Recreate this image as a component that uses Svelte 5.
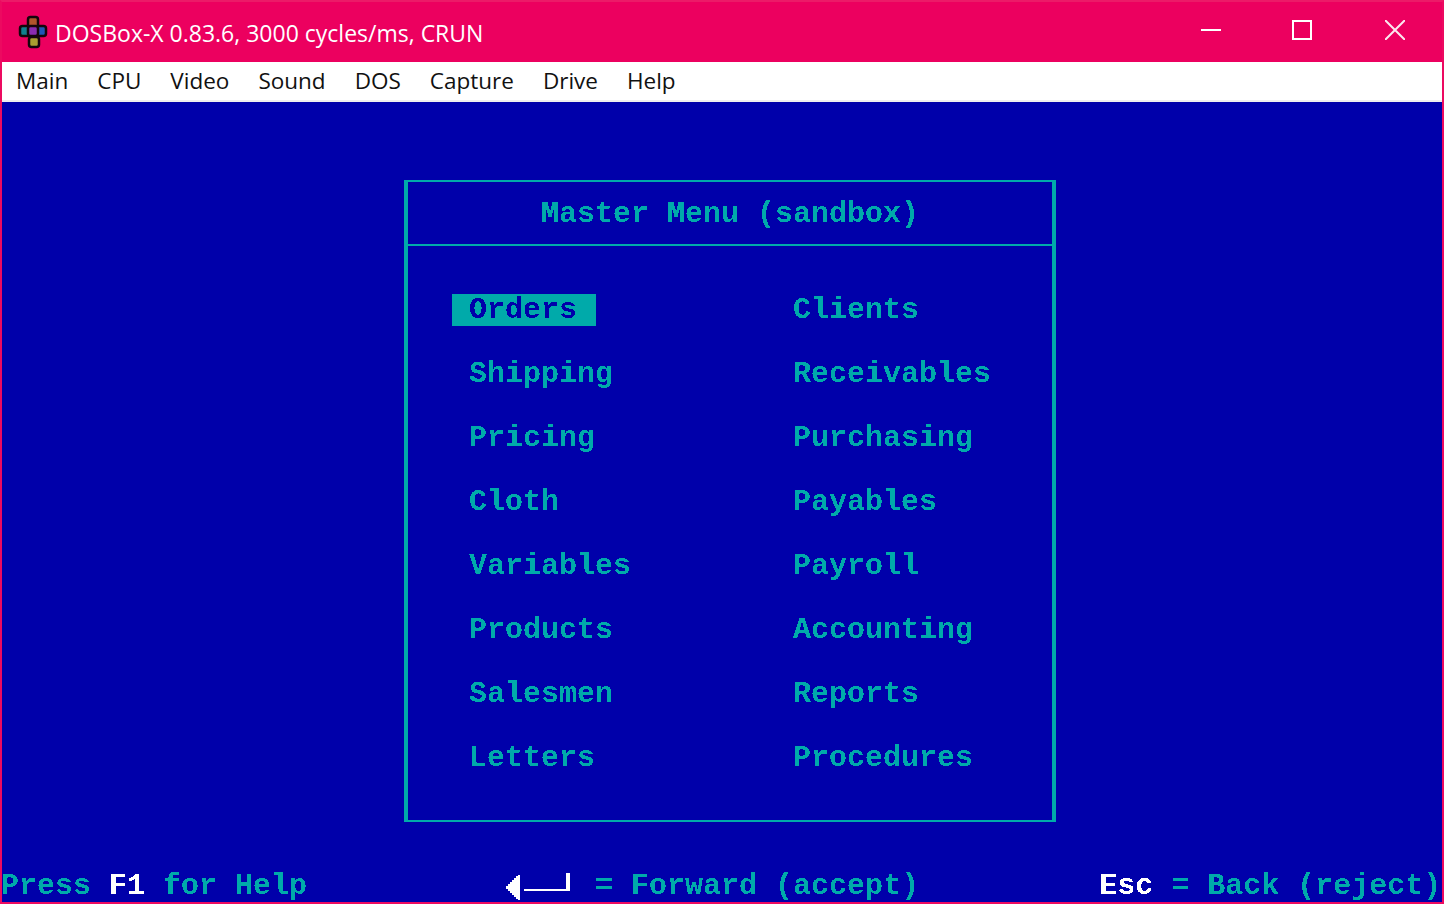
<script lang="ts">
  const menus = ["Main", "CPU", "Video", "Sound", "DOS", "Capture", "Drive", "Help"];

  // two columns, read row by row
  const items = [
    ["Orders", "Clients"],
    ["Shipping", "Receivables"],
    ["Pricing", "Purchasing"],
    ["Cloth", "Payables"],
    ["Variables", "Payroll"],
    ["Products", "Accounting"],
    ["Salesmen", "Reports"],
    ["Letters", "Procedures"],
  ].flat();

  let selected = $state("Orders");
</script>

<div class="window">
  <header class="titlebar">
    <svg class="app-icon" width="30" height="34" viewBox="0 0 30 34">
      <g stroke="#14060c" stroke-width="2.5" stroke-linejoin="round">
        <rect x="10" y="2" width="10" height="10" rx="2.5" fill="#b0552c" />
        <rect x="2" y="11" width="10" height="10" rx="2.5" fill="#10808e" />
        <rect x="18" y="11" width="10" height="10" rx="2.5" fill="#1f55b5" />
        <rect x="10" y="11" width="10" height="10" rx="2.5" fill="#8a2bb0" />
        <rect x="11" y="22" width="10" height="10" rx="2.5" fill="#a8a030" />
      </g>
    </svg>
    <span class="title">DOSBox-X 0.83.6, 3000 cycles/ms, CRUN</span>
    <div class="controls">
      <button aria-label="Minimize">
        <svg width="20" height="20" viewBox="0 0 20 20"><path d="M0 10h20" /></svg>
      </button>
      <button aria-label="Maximize">
        <svg class="max" width="20" height="20" viewBox="0 0 20 20"><path d="M1 1h18v18H1z" /></svg>
      </button>
      <button aria-label="Close">
        <svg class="close" width="20" height="20" viewBox="0 0 20 20"><path d="M0 0l20 20M20 0L0 20" /></svg>
      </button>
    </div>
  </header>

  <nav class="menubar">
    {#each menus as menu}
      <span>{menu}</span>
    {/each}
  </nav>

  <main class="screen">
    <svg class="defs" width="0" height="0" aria-hidden="true">
      <filter id="crisp" color-interpolation-filters="sRGB" x="0" y="0" width="100%" height="100%">
        <feComponentTransfer>
          <feFuncA type="discrete" tableValues="0 1" />
        </feComponentTransfer>
      </filter>
    </svg>

    <section class="box">
      <h1>Master Menu (sandbox)</h1>
      <div class="items">
        {#each items as item}
          <button class="item" class:active={item === selected} onclick={() => (selected = item)}>
            <span>{item}</span>
          </button>
        {/each}
      </div>
    </section>

    <footer class="status">
      <span class="help">Press <b>F1</b> for Help</span>
      <svg class="enter" width="72" height="32" viewBox="0 0 72 32" shape-rendering="crispEdges">
        <path d="M0 16h2v-2h2v-2h2v-2h2v-2h2v-2h2v-1h2v25h-2v-1h-2v-2h-2v-2h-2v-2h-2v-2h-2v-2h-2z" />
        <path d="M18 19h42v-16h4v18h-46z" />
      </svg>
      <span class="forward">= Forward (accept)</span>
      <span class="back"><b>Esc</b> = Back (reject)</span>
    </footer>
  </main>
</div>

<style>
  :global(body) {
    margin: 0;
    background: #0000aa;
  }

  .window {
    width: 1444px;
    height: 904px;
    box-sizing: border-box;
    display: flex;
    flex-direction: column;
    border: 2px solid #ec0a60;
    border-top-color: #ec1a68;
    overflow: hidden;
  }

  .titlebar {
    flex: 0 0 60px;
    display: flex;
    align-items: center;
    background: #ec005f;
    color: #fff;
    padding-left: 16px;
    font-family: "Open Sans", "Noto Sans", sans-serif;
  }

  .app-icon {
    margin-right: 7px;
    filter: blur(0.6px);
  }

  .title {
    font-size: 23px;
    margin-top: 1px;
  }

  .controls {
    margin: -4px 1px 0 auto;
    display: flex;
  }

  .controls button {
    width: 92px;
    height: 44px;
    padding: 0;
    border: 0;
    background: none;
    display: flex;
    align-items: center;
    justify-content: center;
  }

  .controls svg {
    fill: none;
    stroke: #fff;
    stroke-width: 2;
  }

  .controls .max {
    margin-right: 2px;
  }

  .controls .close {
    stroke: #fbe8ef;
  }

  .menubar {
    flex: 0 0 40px;
    box-sizing: border-box;
    display: flex;
    align-items: center;
    gap: 29px;
    padding: 0 0 1px 14px;
    background: #fff;
    border-bottom: 2px solid #eeeeee;
    color: #111;
    font-family: "Open Sans", "Noto Sans", sans-serif;
    font-size: 22.5px;
  }

  .screen {
    flex: 1;
    display: flex;
    flex-direction: column;
    background: #0000aa;
    color: #00aaaa;
    font-family: "Liberation Mono", monospace;
    font-weight: 700;
    font-size: 30px;
    line-height: 32px;
  }

  .defs {
    position: absolute;
  }

  .box {
    width: 652px;
    height: 642px;
    box-sizing: border-box;
    margin: 78px 0 0 402px;
    border: solid #00aaaa;
    border-width: 2px 4px;
  }

  h1 {
    margin: 0;
    height: 64px;
    box-sizing: border-box;
    padding: 16px 0 0 133px;
    border-bottom: 2px solid #00aaaa;
    font: inherit;
    filter: url(#crisp);
  }

  .items {
    display: grid;
    grid-template-columns: 324px 1fr;
    grid-auto-rows: 32px;
    row-gap: 32px;
    padding: 48px 0 0 44px;
  }

  .item {
    justify-self: start;
    padding: 0 19px 0 17px;
    border: 0;
    background: none;
    color: inherit;
    font: inherit;
    cursor: pointer;
  }

  .item span {
    display: block;
    filter: url(#crisp);
  }

  .item.active {
    background: #00aaaa;
    color: #0000aa;
  }

  .status {
    margin-top: 48px;
    display: flex;
    height: 32px;
    white-space: pre;
  }

  .status span {
    filter: url(#crisp);
  }

  .status b {
    color: #fff;
  }

  .help {
    margin-left: -1px;
  }

  .enter {
    margin-left: 199px;
    fill: #fff;
  }

  .forward {
    margin-left: 17px;
  }

  .back {
    margin-left: 180px;
  }
</style>
